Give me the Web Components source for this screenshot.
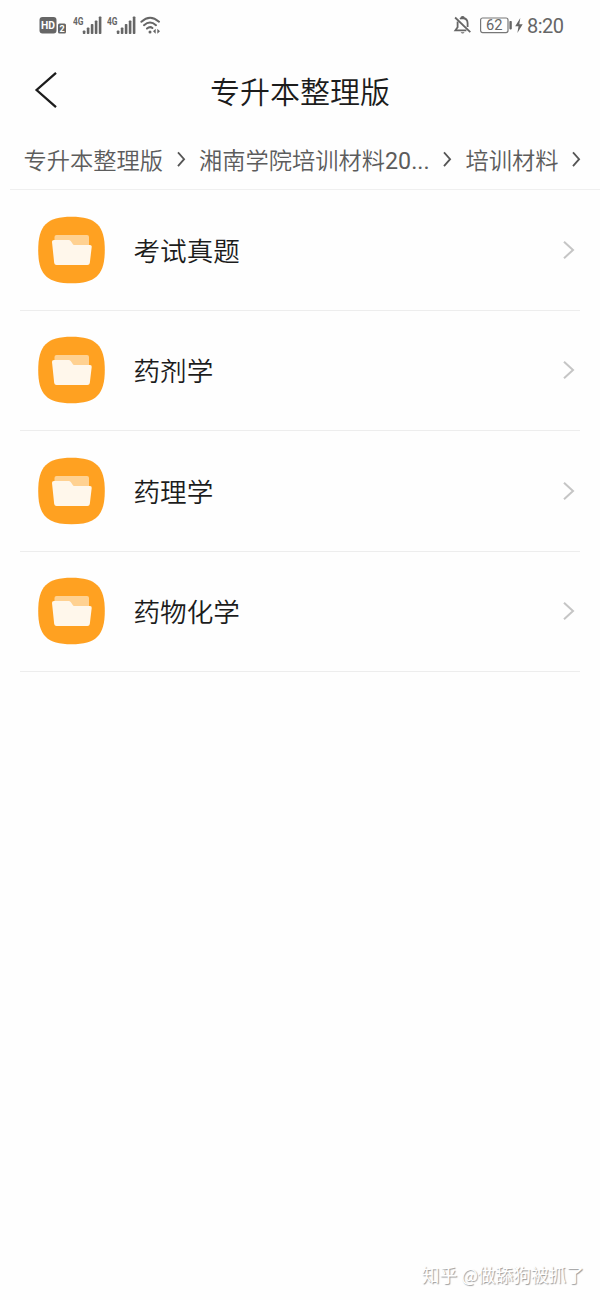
<!DOCTYPE html>
<html lang="zh-CN">
<head>
<meta charset="utf-8">
<title>专升本整理版</title>
<style>
html,body{margin:0;background:#fefefe}
body{font-family:Roboto,"Noto Sans CJK SC",sans-serif}
</style>
</head>
<body>
<file-screen></file-screen>
<script>
function define(name, html, setup) {
  const template = document.createElement('template');
  template.innerHTML = html;
  customElements.define(name, class extends HTMLElement {
    constructor() {
      super();
      this.attachShadow({mode: 'open'}).append(template.content.cloneNode(true));
    }
    connectedCallback() { if (setup) setup(this, this.shadowRoot); }
  });
}

define('signal-meter', `
<style>
:host{display:block;width:28px;height:20px}
svg{display:block}
text{font:700 10.5px "Roboto",sans-serif;fill:#666}
</style>
<svg width="29" height="20" viewBox="0 0 29 20">
  <text x="0" y="9.5" textLength="10.5" lengthAdjust="spacingAndGlyphs">4G</text>
  <g fill="#666"><rect x="9.8" y="15.5" width="2.6" height="3.5" rx=".8"/><rect x="13.8" y="12.5" width="2.6" height="6.5" rx=".8"/><rect x="17.8" y="9" width="2.6" height="10" rx=".8"/><rect x="21.8" y="5.5" width="2.6" height="13.5" rx=".8"/><rect x="25.8" y="1.5" width="2.6" height="17.5" rx=".8"/></g>
</svg>`);

define('status-bar', `
<style>
:host{display:flex;height:50px;box-sizing:border-box;padding:15px 37px 0 39px;color:#666;align-items:flex-start}
svg{display:block;flex:none}
.hd{font:700 11.5px Roboto,sans-serif;fill:#fff}
.gap{flex:1}
signal-meter{margin-left:6px}
signal-meter.first{margin-left:7px}
.time{font:400 20px/20px Roboto,sans-serif;width:36px;margin-left:4.5px;margin-top:1px;white-space:nowrap;letter-spacing:-.5px}
</style>
<svg width="27" height="20" viewBox="0 0 27 20">
  <rect x=".5" y="2" width="17" height="16.5" rx="3" fill="#666"/>
  <text class="hd" x="2" y="14.4" textLength="14" lengthAdjust="spacingAndGlyphs">HD</text>
  <rect x="19" y="8.5" width="8" height="10" rx="1.6" fill="#666"/>
  <text class="hd" x="20.5" y="16.9" style="font-size:9px">2</text>
</svg>
<signal-meter class="first"></signal-meter><signal-meter></signal-meter>
<svg width="21" height="20" viewBox="0 0 21 20" style="margin-left:5px" fill="none" stroke="#666" stroke-width="2" stroke-linecap="round">
  <path d="M1.4 6.7Q10 -1.2 19 6.7M4 10.2Q10 4.9 16 10.2M7 13.6Q10 11 12.4 13"/>
  <circle cx="10" cy="17" r="1.5" fill="#666" stroke="none"/>
  <path d="M15.7 13.8L13 16.3L15.7 18.8ZM17.3 13.8L20 16.3L17.3 18.8Z" fill="#666" stroke="none"/>
</svg>
<div class="gap"></div>
<svg width="18" height="20" viewBox="0 0 18 20" fill="none" stroke="#666" stroke-width="1.8">
  <path d="M2.1 2.5L17.3 17.2"/>
  <path d="M7 3.9Q8 3.1 9.6 3Q14.6 3.5 14.6 8.2V12M4.6 6.5V12.2L2.4 15.3H13.4M8.2 2.7Q9.7 1 11.1 2.7"/>
  <path d="M7.6 17.2Q9.6 19.7 11.6 17.2Z" fill="#666" stroke="none"/>
</svg>
<svg width="43" height="20" viewBox="0 0 43 20" style="margin-left:8.5px">
  <rect x=".6" y="3" width="27.4" height="14.6" rx="2" fill="none" stroke="#777" stroke-width="1.2"/>
  <text x="6" y="15.2" textLength="16.5" lengthAdjust="spacingAndGlyphs" style="font:400 14px Roboto,sans-serif;fill:#666">62</text>
  <rect x="29.4" y="6" width="2.4" height="8.4" rx=".8" fill="#666"/>
  <path d="M40.3 3L35.2 11.3H38.5L37.4 18L42.7 9.3H39.3Z" fill="#666"/>
</svg>
<div class="time">8:20</div>`);

define('title-bar', `
<style>
:host{display:grid;grid-template-columns:90px 1fr 90px;height:80px;align-items:center;color:#1c1c1c}
svg{display:block;margin-left:34px}
h1{margin:0;padding-top:5px;text-align:center;font:350 30px/44px Roboto,"Noto Sans CJK SC",sans-serif;white-space:nowrap}
</style>
<svg width="26" height="40" viewBox="0 0 26 40" fill="none" stroke="#1c1c1c" stroke-width="2.3"><path d="M22 2.8L2.6 20L22 37.2"/></svg>
<h1><slot></slot></h1>`);

define('crumb-item', `
<style>
:host{display:flex;align-items:center;white-space:nowrap;flex:none}
svg{display:block;margin:0 13.5px 0 13.5px}
span{padding-top:3px}
::slotted(b){font-weight:400}
</style>
<span><slot></slot></span>
<svg width="9" height="18" viewBox="0 0 9 18" fill="none" stroke="#555" stroke-width="1.8"><path d="M1 2.3L7.1 9.2L1 16.1"/></svg>`);

define('crumb-trail', `
<style>
:host{display:flex;box-sizing:border-box;height:60px;margin-left:10px;padding:0 0 1px 13.5px;border-bottom:1px solid #efefef;align-items:center;overflow:hidden;font:350 23.25px/34px Roboto,"Noto Sans CJK SC",sans-serif;color:#5c5c5c}
</style><slot></slot>`);

define('folder-icon', `
<style>:host{display:block;width:68px;height:68px}svg{display:block}</style>
<svg width="68" height="68" viewBox="0 0 68 68">
  <path d="M34.5 .7C59 .7 67.8 9.5 67.8 34S59 67.3 34.5 67.3 1.2 58.5 1.2 34 10 .7 34.5 .7Z" fill="#ffa121"/>
  <path d="M17.5 23V21Q17.5 19 19.5 19H50Q52 19 52 21V31H17.5Z" fill="#ffd191"/>
  <path d="M17 24H31.5Q33 24 33.9 25.3L35.9 28.2Q36.6 29.1 37.8 29.1H53Q55 29.1 54.7 31.1L52.8 47Q52.5 49 50.5 49H19.5Q17.5 49 17.2 47L15 26Q14.8 24 17 24Z" fill="#fff7eb"/>
</svg>`);

define('folder-row', `
<style>
:host{display:flex;box-sizing:border-box;height:120.5px;margin:0 20px;padding:0 5px 0 17px;border-bottom:1px solid #ededed;align-items:center;color:#1c1c1c}
.name{flex:1;margin-left:28.5px;padding-top:4px;font:350 26.6px/40px Roboto,"Noto Sans CJK SC",sans-serif}
.go{display:block}
</style>
<folder-icon></folder-icon>
<span class="name"><slot></slot></span>
<svg class="go" width="13" height="20" viewBox="0 0 13 20" fill="none" stroke="#c5c5c5" stroke-width="2"><path d="M2 1.8L11 10L2 18.2"/></svg>`);

define('author-mark', `
<style>
:host{display:block;padding-right:16px;text-align:right;font:400 17.7px/24px "Noto Sans CJK SC",sans-serif;color:#fff;text-shadow:1px 1px 1px #999;white-space:nowrap}
</style><slot></slot>`);

define('file-screen', `
<style>
:host{display:flex;flex-direction:column;width:600px;height:1300px;overflow:hidden;background:#fefefe}
main{flex:1;padding-top:.1px}
author-mark{margin-bottom:14px}
</style>
<status-bar></status-bar>
<title-bar>专升本整理版</title-bar>
<crumb-trail><crumb-item>专升本整理版</crumb-item><crumb-item>湘南学院培训材料<b>20...</b></crumb-item><crumb-item>培训材料</crumb-item></crumb-trail>
<main></main>
<author-mark>知乎 @做舔狗被抓了</author-mark>`, (host, root) => {
  const main = root.querySelector('main');
  for (const name of ['考试真题', '药剂学', '药理学', '药物化学']) {
    const row = document.createElement('folder-row');
    row.textContent = name;
    main.append(row);
  }
});
</script>
</body>
</html>
